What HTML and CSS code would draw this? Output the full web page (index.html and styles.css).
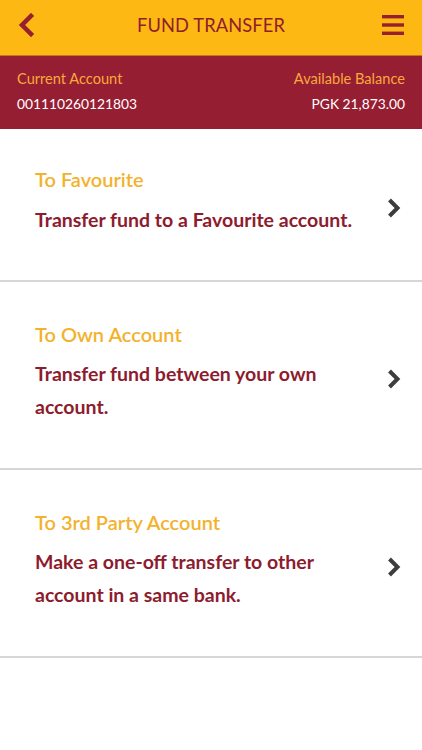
FILE: index.html
```html
<!DOCTYPE html>
<html>
<head>
<meta charset="utf-8">
<link rel="stylesheet" href="styles.css">
</head>
<body>
<div class="app">
  <header class="topbar">
    <span class="back">
      <svg width="20" height="24" viewBox="0 0 20 24"><path d="M15 3 L6 12 L15 21" fill="none" stroke="#952031" stroke-width="4.5" stroke-linecap="square" stroke-linejoin="miter"/></svg>
    </span>
    <h1 class="title">FUND TRANSFER</h1>
    <span class="menu">
      <svg width="24" height="22" viewBox="0 0 24 22"><rect x="0" y="1" width="22" height="3.4" fill="#952031"/><rect x="0" y="9.3" width="22" height="3.4" fill="#952031"/><rect x="0" y="17.6" width="22" height="3.4" fill="#952031"/></svg>
    </span>
  </header>
  <section class="account">
    <div class="acc-col">
      <div class="acc-label">Current Account</div>
      <div class="acc-value">001110260121803</div>
    </div>
    <div class="acc-col right">
      <div class="acc-label">Available Balance</div>
      <div class="acc-value">PGK 21,873.00</div>
    </div>
  </section>
  <ul class="options">
    <li class="option">
      <div class="opt-text">
        <div class="opt-title">To Favourite</div>
        <div class="opt-desc">Transfer fund to a Favourite account.</div>
      </div>
      <svg class="chev" width="16" height="22" viewBox="0 0 16 22"><path d="M3.5 3 L11.5 11 L3.5 19" fill="none" stroke="#3d3d3d" stroke-width="4"/></svg>
    </li>
    <li class="option">
      <div class="opt-text">
        <div class="opt-title">To Own Account</div>
        <div class="opt-desc">Transfer fund between your own account.</div>
      </div>
      <svg class="chev" width="16" height="22" viewBox="0 0 16 22"><path d="M3.5 3 L11.5 11 L3.5 19" fill="none" stroke="#3d3d3d" stroke-width="4"/></svg>
    </li>
    <li class="option">
      <div class="opt-text">
        <div class="opt-title">To 3rd Party Account</div>
        <div class="opt-desc">Make a one-off transfer to other account in a same bank.</div>
      </div>
      <svg class="chev" width="16" height="22" viewBox="0 0 16 22"><path d="M3.5 3 L11.5 11 L3.5 19" fill="none" stroke="#3d3d3d" stroke-width="4"/></svg>
    </li>
  </ul>
</div>
</body>
</html>
```
FILE: styles.css
```css
* { box-sizing: border-box; }
html, body { margin: 0; padding: 0; background: #ffffff; }
body { font-family: Lato, "Open Sans", sans-serif; }
.app { width: 422px; min-height: 750px; background: #fff; }
.topbar {
  height: 56px;
  background: #fdb813;
  border-bottom: 1px solid #c9741a;
  display: flex;
  align-items: center;
  justify-content: space-between;
  padding: 0 16px 5px 16px;
}
.back { width: 24px; display: flex; align-items: center; }
.menu { width: 24px; display: flex; align-items: center; justify-content: flex-end; }
.title {
  margin: 0;
  font-size: 18.3px;
  font-weight: 400;
  color: #8f1d2e;
  letter-spacing: 0.1px;
}
.account {
  height: 73px;
  background: #961e33;
  display: flex;
  justify-content: space-between;
  padding: 13px 17px 0 17px;
}
.acc-col.right { text-align: right; }
.acc-label { color: #f9a93a; font-size: 14.6px; line-height: 20px; }
.acc-value { color: #ffffff; font-size: 13.8px; line-height: 20px; margin-top: 5px; }
.options { list-style: none; margin: 0; padding: 0; }
.option {
  display: flex;
  align-items: center;
  justify-content: space-between;
  padding: 38px 20px 44px 35px;
  border-bottom: 2px solid #d6d6d6;
}
.option + .option { padding-top: 40px; padding-bottom: 45px; }
.option + .option .opt-title { margin-bottom: 11px; }
.opt-text { width: 330px; }
.opt-title { color: #f3b22c; font-size: 20px; font-weight: 600; line-height: 24px; margin-bottom: 12px; }
.opt-desc { color: #8c1c2e; font-size: 19.5px; font-weight: 700; line-height: 33px; }
.chev { margin-top: 12px; }
```
